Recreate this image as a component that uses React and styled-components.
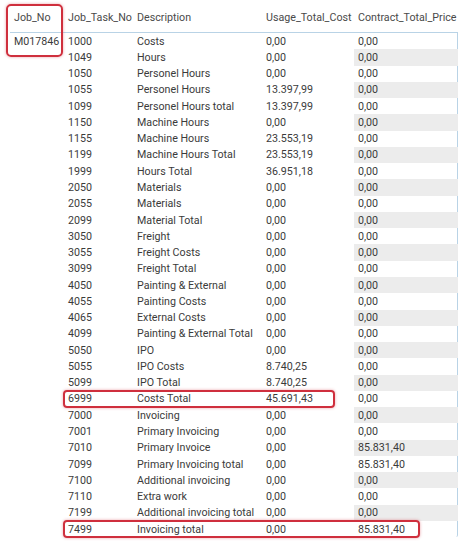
import React from 'react';
import styled, { createGlobalStyle } from 'styled-components';

const GlobalStyle = createGlobalStyle`
  html, body {
    margin: 0;
    padding: 0;
    background: #ffffff;
  }
  body {
    font-family: Roboto, "Noto Sans", "Liberation Sans", sans-serif;
  }
`;

const COLS = '54px 69px 129px 92px 104px';

const Page = styled.div`
  width: 474px;
  height: 551px;
  padding: 1px 0 0 10px;
  box-sizing: border-box;
  overflow: hidden;
`;

const Table = styled.div`
  position: relative;
  width: 448px;
  font-size: 10.7px;
  color: #3b3b3b;
`;

const HeaderRow = styled.div`
  display: grid;
  grid-template-columns: ${COLS};
  height: 32px;
  align-items: center;
  border-bottom: 1px solid #b9d3e6;
  color: #4a4a4a;
  padding-top: 2px;
  box-sizing: border-box;
`;

const Body = styled.div`
  border-right: 1px solid #b9d3e6;
  border-bottom-right-radius: 2px;
`;

const Row = styled.div`
  position: relative;
  display: grid;
  grid-template-columns: ${COLS};
  height: 16.27px;
  align-items: center;

  &::after {
    content: '';
    display: ${p => (p.$mark ? 'block' : 'none')};
    position: absolute;
    left: 53px;
    top: -1px;
    bottom: -1px;
    width: ${p => p.$mark || 0}px;
    border: 2px solid #cf2f3d;
    border-radius: 4px;
    box-shadow: 0 0 3px rgba(207, 47, 61, 0.45);
  }
`;

const Cell = styled.div`
  padding-left: 4px;
  white-space: nowrap;
  height: 100%;
  display: flex;
  align-items: center;
  background: ${p => (p.$shade ? '#ececec' : 'transparent')};
`;

const JobBox = styled.div`
  position: absolute;
  left: -4px;
  top: 3px;
  width: 53px;
  height: 49px;
  border: 2px solid #cf2f3d;
  border-radius: 5px;
  box-shadow: 0 0 3px rgba(207, 47, 61, 0.45);
`;

const rows = [
  ['1000', 'Costs', '0,00', '0,00'],
  ['1049', 'Hours', '0,00', '0,00'],
  ['1050', 'Personel Hours', '0,00', '0,00'],
  ['1055', 'Personel Hours', '13.397,99', '0,00'],
  ['1099', 'Personel Hours total', '13.397,99', '0,00'],
  ['1150', 'Machine Hours', '0,00', '0,00'],
  ['1155', 'Machine Hours', '23.553,19', '0,00'],
  ['1199', 'Machine Hours Total', '23.553,19', '0,00'],
  ['1999', 'Hours Total', '36.951,18', '0,00'],
  ['2050', 'Materials', '0,00', '0,00'],
  ['2055', 'Materials', '0,00', '0,00'],
  ['2099', 'Material Total', '0,00', '0,00'],
  ['3050', 'Freight', '0,00', '0,00'],
  ['3055', 'Freight Costs', '0,00', '0,00'],
  ['3099', 'Freight Total', '0,00', '0,00'],
  ['4050', 'Painting & External', '0,00', '0,00'],
  ['4055', 'Painting Costs', '0,00', '0,00'],
  ['4065', 'External Costs', '0,00', '0,00'],
  ['4099', 'Painting & External Total', '0,00', '0,00'],
  ['5050', 'IPO', '0,00', '0,00'],
  ['5055', 'IPO Costs', '8.740,25', '0,00'],
  ['5099', 'IPO Total', '8.740,25', '0,00'],
  ['6999', 'Costs Total', '45.691,43', '0,00', 268],
  ['7000', 'Invoicing', '0,00', '0,00'],
  ['7001', 'Primary Invoicing', '0,00', '0,00'],
  ['7010', 'Primary Invoice', '0,00', '85.831,40'],
  ['7099', 'Primary Invoicing total', '0,00', '85.831,40'],
  ['7100', 'Additional invoicing', '0,00', '0,00'],
  ['7110', 'Extra work', '0,00', '0,00'],
  ['7199', 'Additional invoicing total', '0,00', '0,00'],
  ['7499', 'Invoicing total', '0,00', '85.831,40', 353],
];

const App = () => {
  return (
    <Page>
      <GlobalStyle />
      <Table>
        <HeaderRow>
          <Cell>Job_No</Cell>
          <Cell>Job_Task_No</Cell>
          <Cell>Description</Cell>
          <Cell>Usage_Total_Cost</Cell>
          <Cell>Contract_Total_Price</Cell>
        </HeaderRow>
        <Body>
          {rows.map(([task, desc, usage, contract, mark], i) => (
            <Row key={task} $mark={mark}>
              <Cell>{i === 0 ? 'M017846' : ''}</Cell>
              <Cell>{task}</Cell>
              <Cell>{desc}</Cell>
              <Cell>{usage}</Cell>
              <Cell $shade={i % 2 === 1}>{contract}</Cell>
            </Row>
          ))}
        </Body>
        <JobBox />
      </Table>
    </Page>
  );
};

export default App;
